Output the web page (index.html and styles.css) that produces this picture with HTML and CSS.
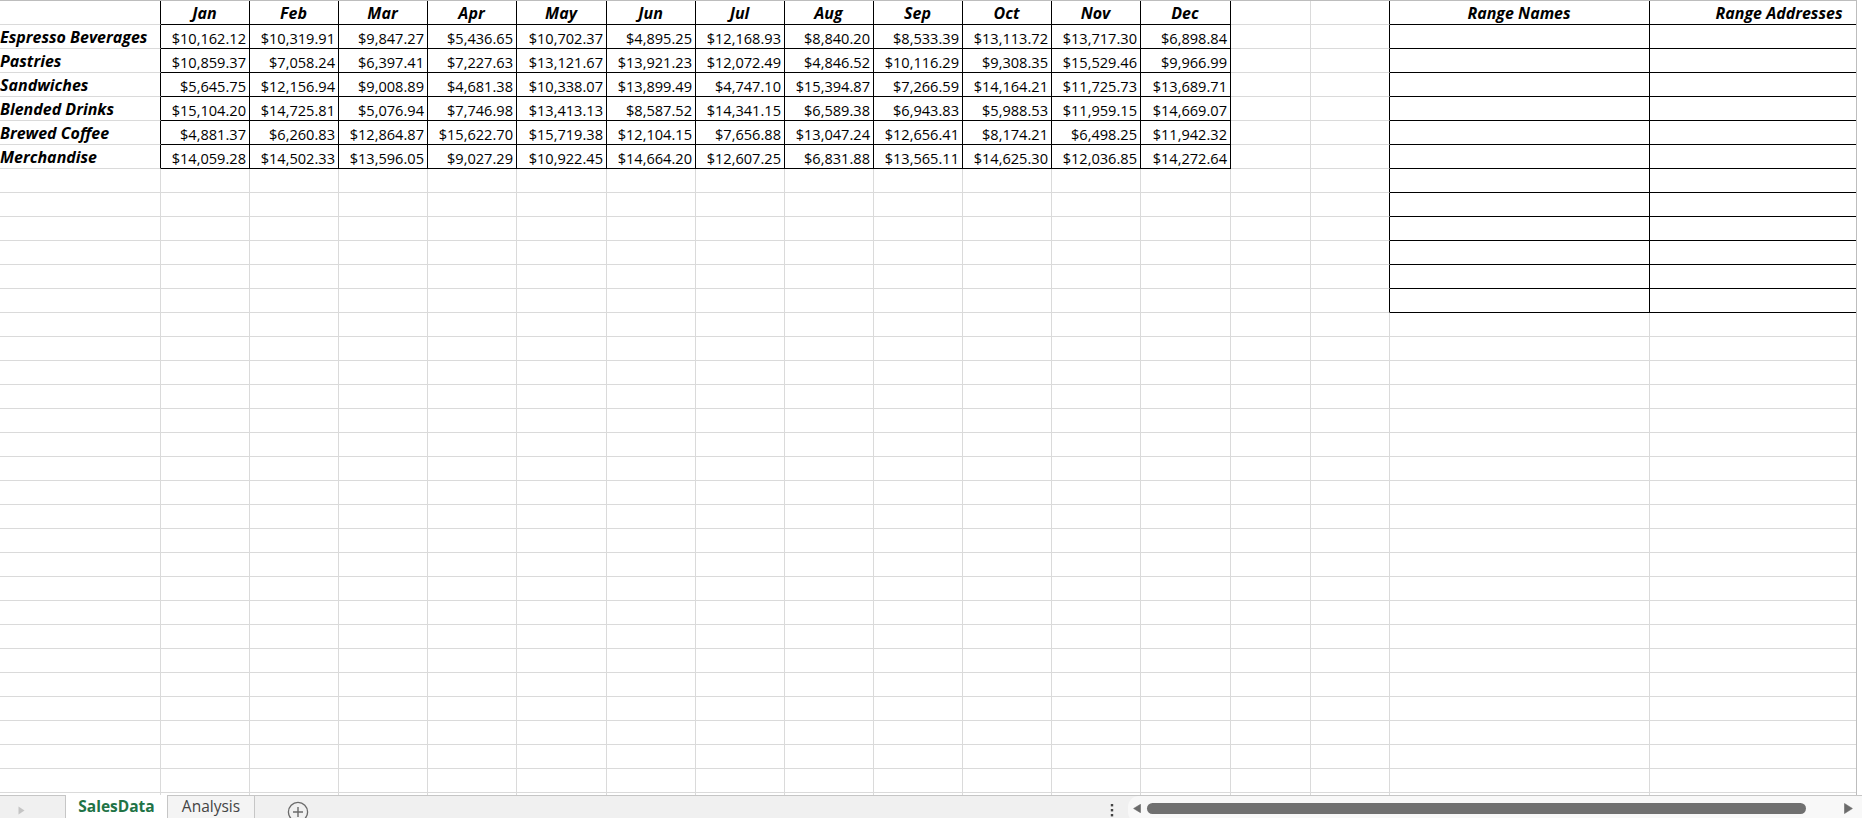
FILE: index.html
```html
<!DOCTYPE html>
<html lang="en">
<head>
<meta charset="utf-8">
<title>SalesData</title>
<link rel="stylesheet" href="styles.css">
</head>
<body>
<div class="app">
  <div class="sheet">
    <div class="grid">
      <!-- row 1 -->
      <div class="lab"></div>
      <div class="hd">Jan</div><div class="hd">Feb</div><div class="hd">Mar</div><div class="hd">Apr</div><div class="hd">May</div><div class="hd">Jun</div><div class="hd">Jul</div><div class="hd">Aug</div><div class="hd">Sep</div><div class="hd">Oct</div><div class="hd">Nov</div><div class="hd">Dec</div>
      <div></div><div class="edge"></div><div class="rn rh">Range Names</div><div class="ra rh">Range Addresses</div>
      <!-- row 2 -->
      <div class="lab">Espresso Beverages</div>
      <div class="num">$10,162.12</div><div class="num">$10,319.91</div><div class="num">$9,847.27</div><div class="num">$5,436.65</div><div class="num">$10,702.37</div><div class="num">$4,895.25</div><div class="num">$12,168.93</div><div class="num">$8,840.20</div><div class="num">$8,533.39</div><div class="num">$13,113.72</div><div class="num">$13,717.30</div><div class="num">$6,898.84</div>
      <div></div><div class="edge"></div><div class="rn"></div><div class="ra"></div>
      <!-- row 3 -->
      <div class="lab">Pastries</div>
      <div class="num">$10,859.37</div><div class="num">$7,058.24</div><div class="num">$6,397.41</div><div class="num">$7,227.63</div><div class="num">$13,121.67</div><div class="num">$13,921.23</div><div class="num">$12,072.49</div><div class="num">$4,846.52</div><div class="num">$10,116.29</div><div class="num">$9,308.35</div><div class="num">$15,529.46</div><div class="num">$9,966.99</div>
      <div></div><div class="edge"></div><div class="rn"></div><div class="ra"></div>
      <!-- row 4 -->
      <div class="lab">Sandwiches</div>
      <div class="num">$5,645.75</div><div class="num">$12,156.94</div><div class="num">$9,008.89</div><div class="num">$4,681.38</div><div class="num">$10,338.07</div><div class="num">$13,899.49</div><div class="num">$4,747.10</div><div class="num">$15,394.87</div><div class="num">$7,266.59</div><div class="num">$14,164.21</div><div class="num">$11,725.73</div><div class="num">$13,689.71</div>
      <div></div><div class="edge"></div><div class="rn"></div><div class="ra"></div>
      <!-- row 5 -->
      <div class="lab">Blended Drinks</div>
      <div class="num">$15,104.20</div><div class="num">$14,725.81</div><div class="num">$5,076.94</div><div class="num">$7,746.98</div><div class="num">$13,413.13</div><div class="num">$8,587.52</div><div class="num">$14,341.15</div><div class="num">$6,589.38</div><div class="num">$6,943.83</div><div class="num">$5,988.53</div><div class="num">$11,959.15</div><div class="num">$14,669.07</div>
      <div></div><div class="edge"></div><div class="rn"></div><div class="ra"></div>
      <!-- row 6 -->
      <div class="lab">Brewed Coffee</div>
      <div class="num">$4,881.37</div><div class="num">$6,260.83</div><div class="num">$12,864.87</div><div class="num">$15,622.70</div><div class="num">$15,719.38</div><div class="num">$12,104.15</div><div class="num">$7,656.88</div><div class="num">$13,047.24</div><div class="num">$12,656.41</div><div class="num">$8,174.21</div><div class="num">$6,498.25</div><div class="num">$11,942.32</div>
      <div></div><div class="edge"></div><div class="rn"></div><div class="ra"></div>
      <!-- row 7 -->
      <div class="lab">Merchandise</div>
      <div class="num">$14,059.28</div><div class="num">$14,502.33</div><div class="num">$13,596.05</div><div class="num">$9,027.29</div><div class="num">$10,922.45</div><div class="num">$14,664.20</div><div class="num">$12,607.25</div><div class="num">$6,831.88</div><div class="num">$13,565.11</div><div class="num">$14,625.30</div><div class="num">$12,036.85</div><div class="num">$14,272.64</div>
      <div></div><div class="edge"></div><div class="rn"></div><div class="ra"></div>
      <!-- rows 8-13 -->
      <div></div><div></div><div></div><div></div><div></div><div></div><div></div><div></div><div></div><div></div><div></div><div></div><div></div><div></div><div class="edge"></div><div class="rn"></div><div class="ra"></div>
      <div></div><div></div><div></div><div></div><div></div><div></div><div></div><div></div><div></div><div></div><div></div><div></div><div></div><div></div><div class="edge"></div><div class="rn"></div><div class="ra"></div>
      <div></div><div></div><div></div><div></div><div></div><div></div><div></div><div></div><div></div><div></div><div></div><div></div><div></div><div></div><div class="edge"></div><div class="rn"></div><div class="ra"></div>
      <div></div><div></div><div></div><div></div><div></div><div></div><div></div><div></div><div></div><div></div><div></div><div></div><div></div><div></div><div class="edge"></div><div class="rn"></div><div class="ra"></div>
      <div></div><div></div><div></div><div></div><div></div><div></div><div></div><div></div><div></div><div></div><div></div><div></div><div></div><div></div><div class="edge"></div><div class="rn"></div><div class="ra"></div>
      <div></div><div></div><div></div><div></div><div></div><div></div><div></div><div></div><div></div><div></div><div></div><div></div><div></div><div></div><div class="edge"></div><div class="rn"></div><div class="ra"></div>
      <!-- rows 14-34 -->
      <div></div><div></div><div></div><div></div><div></div><div></div><div></div><div></div><div></div><div></div><div></div><div></div><div></div><div></div><div></div><div></div><div></div>
      <div></div><div></div><div></div><div></div><div></div><div></div><div></div><div></div><div></div><div></div><div></div><div></div><div></div><div></div><div></div><div></div><div></div>
      <div></div><div></div><div></div><div></div><div></div><div></div><div></div><div></div><div></div><div></div><div></div><div></div><div></div><div></div><div></div><div></div><div></div>
      <div></div><div></div><div></div><div></div><div></div><div></div><div></div><div></div><div></div><div></div><div></div><div></div><div></div><div></div><div></div><div></div><div></div>
      <div></div><div></div><div></div><div></div><div></div><div></div><div></div><div></div><div></div><div></div><div></div><div></div><div></div><div></div><div></div><div></div><div></div>
      <div></div><div></div><div></div><div></div><div></div><div></div><div></div><div></div><div></div><div></div><div></div><div></div><div></div><div></div><div></div><div></div><div></div>
      <div></div><div></div><div></div><div></div><div></div><div></div><div></div><div></div><div></div><div></div><div></div><div></div><div></div><div></div><div></div><div></div><div></div>
      <div></div><div></div><div></div><div></div><div></div><div></div><div></div><div></div><div></div><div></div><div></div><div></div><div></div><div></div><div></div><div></div><div></div>
      <div></div><div></div><div></div><div></div><div></div><div></div><div></div><div></div><div></div><div></div><div></div><div></div><div></div><div></div><div></div><div></div><div></div>
      <div></div><div></div><div></div><div></div><div></div><div></div><div></div><div></div><div></div><div></div><div></div><div></div><div></div><div></div><div></div><div></div><div></div>
      <div></div><div></div><div></div><div></div><div></div><div></div><div></div><div></div><div></div><div></div><div></div><div></div><div></div><div></div><div></div><div></div><div></div>
      <div></div><div></div><div></div><div></div><div></div><div></div><div></div><div></div><div></div><div></div><div></div><div></div><div></div><div></div><div></div><div></div><div></div>
      <div></div><div></div><div></div><div></div><div></div><div></div><div></div><div></div><div></div><div></div><div></div><div></div><div></div><div></div><div></div><div></div><div></div>
      <div></div><div></div><div></div><div></div><div></div><div></div><div></div><div></div><div></div><div></div><div></div><div></div><div></div><div></div><div></div><div></div><div></div>
      <div></div><div></div><div></div><div></div><div></div><div></div><div></div><div></div><div></div><div></div><div></div><div></div><div></div><div></div><div></div><div></div><div></div>
      <div></div><div></div><div></div><div></div><div></div><div></div><div></div><div></div><div></div><div></div><div></div><div></div><div></div><div></div><div></div><div></div><div></div>
      <div></div><div></div><div></div><div></div><div></div><div></div><div></div><div></div><div></div><div></div><div></div><div></div><div></div><div></div><div></div><div></div><div></div>
      <div></div><div></div><div></div><div></div><div></div><div></div><div></div><div></div><div></div><div></div><div></div><div></div><div></div><div></div><div></div><div></div><div></div>
      <div></div><div></div><div></div><div></div><div></div><div></div><div></div><div></div><div></div><div></div><div></div><div></div><div></div><div></div><div></div><div></div><div></div>
      <div></div><div></div><div></div><div></div><div></div><div></div><div></div><div></div><div></div><div></div><div></div><div></div><div></div><div></div><div></div><div></div><div></div>
      <div></div><div></div><div></div><div></div><div></div><div></div><div></div><div></div><div></div><div></div><div></div><div></div><div></div><div></div><div></div><div></div><div></div>
    </div>
  </div>
  <div class="tabbar">
    <div class="nav">
      <svg class="nav-arrow" width="7" height="9" viewBox="0 0 7 9"><polygon points="0.5,0.5 6.5,4.5 0.5,8.5" fill="#c4c4c4"/></svg>
    </div>
    <div class="tab active">SalesData</div>
    <div class="tab other">Analysis</div>
    <svg class="add" width="22" height="22" viewBox="0 0 22 22"><circle cx="11" cy="11" r="9.6" fill="none" stroke="#6a6a6a" stroke-width="1.3"/><path d="M11 6v10M6 11h10" stroke="#6a6a6a" stroke-width="1.4"/></svg>
    <div class="hbar">
      <svg class="dots" width="4" height="14" viewBox="0 0 4 14"><rect x="0.8" y="0" width="2.4" height="2.4" fill="#444"/><rect x="0.8" y="5" width="2.4" height="2.4" fill="#444"/><rect x="0.8" y="10" width="2.4" height="2.4" fill="#444"/></svg>
      <div class="track">
        <svg class="arr-l" width="8" height="9" viewBox="0 0 8 9"><polygon points="7.5,0.3 7.5,8.7 0.6,4.5" fill="#6b6b6b" stroke="#6b6b6b" stroke-width="0.6" stroke-linejoin="round"/></svg>
        <div class="thumb"></div>
        <svg class="arr-r" width="9" height="11" viewBox="0 0 9 11"><polygon points="0.5,0.5 0.5,10.5 8.4,5.5" fill="#6b6b6b" stroke="#6b6b6b" stroke-width="0.6" stroke-linejoin="round"/></svg>
      </div>
    </div>
  </div>
</div>
</body>
</html>
```

FILE: styles.css
```css
* { box-sizing: border-box; }
html, body { margin: 0; padding: 0; }
body {
  width: 1862px;
  height: 818px;
  overflow: hidden;
  background: #ffffff;
  font-family: "Open Sans", "Noto Sans", sans-serif;
}
.app {
  display: flex;
  flex-direction: column;
  height: 818px;
}
.sheet {
  flex: none;
  width: 1857px;
  height: 795px;
  border-top: 1px solid #bdbdbd;
  border-right: 1px solid #bdbdbd;
  overflow: hidden;
}
.grid {
  display: grid;
  grid-template-columns: 161px 89px 89px 89px 89px 90px 89px 89px 89px 89px 89px 89px 90px 80px 79px 260px 260px;
  grid-auto-rows: 24px;
  font-family: "Open Sans", "Noto Sans", sans-serif;
  font-size: 14.6px;
  color: #000;
}
.grid > div {
  border-right: 1px solid #dadada;
  border-bottom: 1px solid #dadada;
  display: flex;
  align-items: flex-end;
  padding: 0 3px 2px 2px;
  line-height: 16px;
  white-space: nowrap;
  overflow: hidden;
}
.grid > .lab {
  border-right-color: #000;
  font-size: 16px;
  font-weight: 700;
  font-style: italic;
  padding-left: 0;
  padding-bottom: 3px;
}
.grid > .hd {
  border-right-color: #000;
  border-bottom-color: #000;
  justify-content: center;
  font-size: 16px;
  font-weight: 700;
  font-style: italic;
  padding-bottom: 3px;
}
.grid > .num {
  border-right-color: #000;
  border-bottom-color: #000;
  justify-content: flex-end;
}
.grid > .edge { border-right-color: #000; }
.grid > .rn {
  border-right-color: #000;
  border-bottom-color: #000;
}
.grid > .ra { border-bottom-color: #000; }
.grid > .rh {
  justify-content: center;
  font-size: 16px;
  font-weight: 700;
  font-style: italic;
  padding-bottom: 3px;
}

/* sheet tab bar */
.tabbar {
  flex: 1;
  display: flex;
  align-items: stretch;
  background: #f0f0f0;
  border-top: 1px solid #c6c6c6;
  font-family: "Open Sans", "Noto Sans", sans-serif;
  font-size: 15.5px;
}
.nav {
  flex: none;
  width: 66px;
  border-right: 1px solid #c6c6c6;
  padding: 10px 0 0 18px;
}
.nav-arrow { display: block; }
.tab {
  flex: none;
  display: flex;
  justify-content: center;
  line-height: 20px;
}
.tab.active {
  width: 101px;
  margin-top: -1px;
  padding-top: 1px;
  background: #ffffff;
  color: #217346;
  font-weight: 700;
}
.tab.other {
  width: 88px;
  background: #f4f4f4;
  color: #444444;
  border-left: 1px solid #c6c6c6;
  border-right: 1px solid #c6c6c6;
}
.add {
  flex: none;
  display: block;
  margin: 5px 0 0 32px;
}
.hbar {
  margin-left: auto;
  display: flex;
  align-items: stretch;
}
.dots {
  display: block;
  margin: 8px 14px 0 0;
}
.track {
  width: 734px;
  display: flex;
  align-items: flex-start;
  background: #f8f8f8;
  border-radius: 11px 0 0 11px;
  padding-top: 7px;
}
.arr-l { display: block; margin: 1px 0 0 5px; }
.thumb {
  width: 659px;
  height: 11px;
  margin-left: 6px;
  border-radius: 6px;
  background: #707070;
}
.arr-r { display: block; margin: 0 0 0 38px; }
```
